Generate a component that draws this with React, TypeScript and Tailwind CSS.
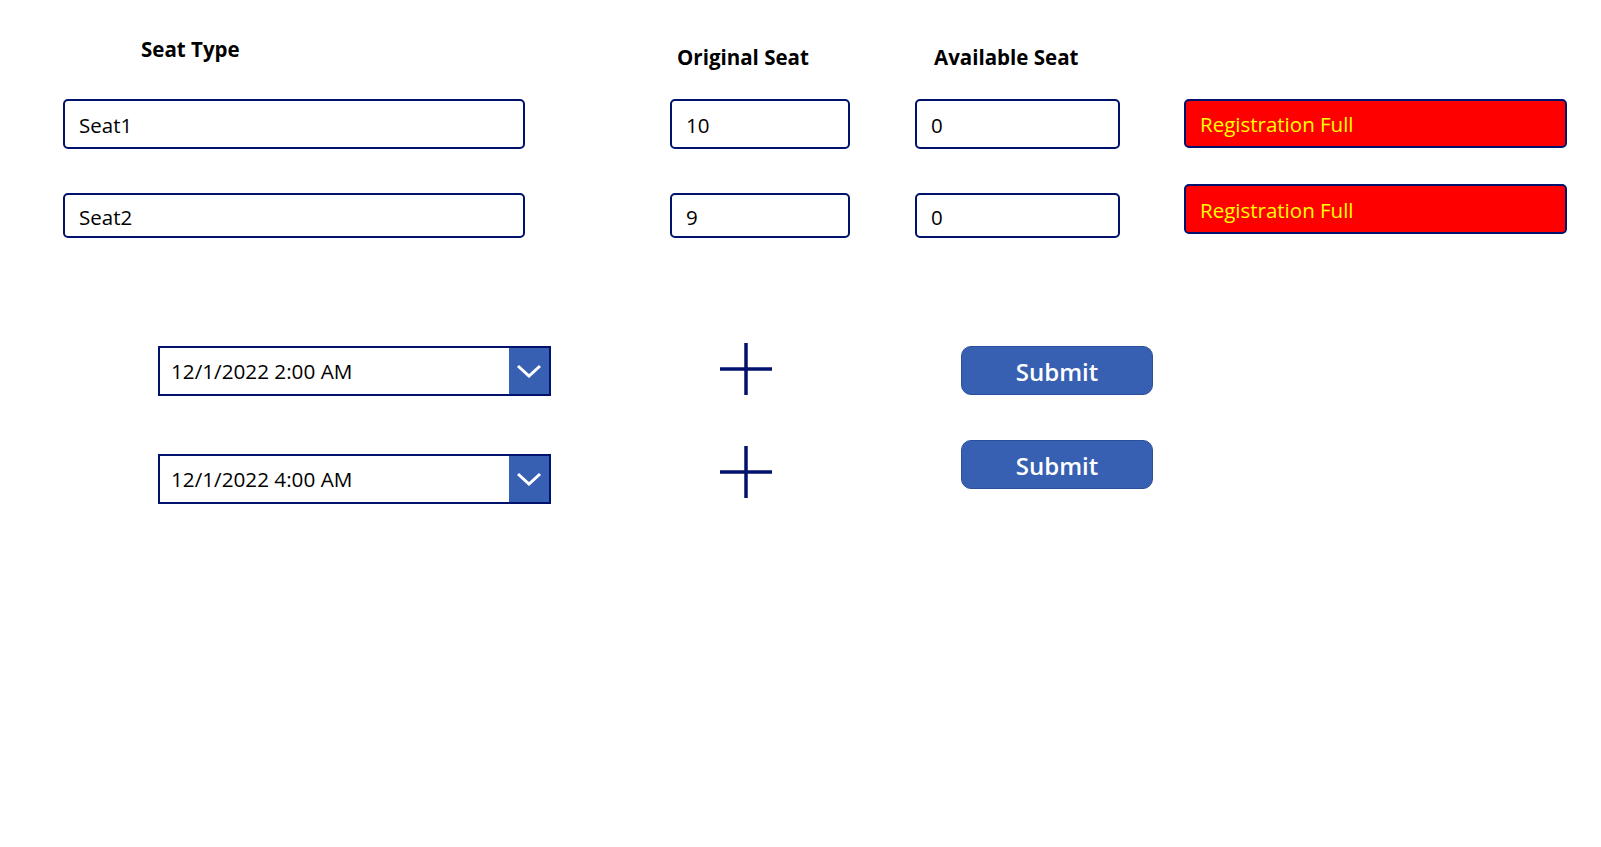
const navy = "border-[#00126b]";

function TextBox({ value, w, h, pt }: { value: string; w: string; h: string; pt: string }) {
  return (
    <div
      className={`${w} ${h} ${pt} flex items-center rounded-[5px] border-2 ${navy} bg-white pl-[14px] text-[20.5px] text-black`}
    >
      {value}
    </div>
  );
}

function FullBadge({ h, pt }: { h: string; pt: string }) {
  return (
    <div
      className={`w-[383px] ${h} ${pt} flex items-center rounded-[5px] border-2 ${navy} bg-[#ff0000] pl-[14px] text-[20.5px] text-[#ffff00]`}
    >
      Registration Full
    </div>
  );
}

function Dropdown({ value, className }: { value: string; className?: string }) {
  return (
    <div className={`flex h-[50px] w-[393px] border-2 ${navy} bg-white ${className ?? ""}`}>
      <div className="flex flex-1 items-center pl-[11px] pt-[2px] text-[20.7px] text-black">{value}</div>
      <div className="flex w-[40px] items-center justify-center bg-[#3860b2]">
        <svg width="26" height="14" viewBox="0 0 26 14" fill="none">
          <polyline points="2,2 13,12 24,2" stroke="white" strokeWidth="3" />
        </svg>
      </div>
    </div>
  );
}

function Plus({ className }: { className?: string }) {
  return (
    <svg width="52" height="52" viewBox="0 0 52 52" className={className}>
      <line x1="0" y1="26" x2="52" y2="26" stroke="#00126b" strokeWidth="3.5" />
      <line x1="26" y1="0" x2="26" y2="52" stroke="#00126b" strokeWidth="3.5" />
    </svg>
  );
}

function SubmitButton({ className }: { className?: string }) {
  return (
    <button
      className={`h-[49px] w-[192px] rounded-[10px] border border-[#2c4f9c] bg-[#3860b2] pt-[3px] text-[24px] font-semibold text-white ${className ?? ""}`}
    >
      Submit
    </button>
  );
}

export default function App() {
  return (
    <main
      className="h-[847px] w-[1601px] overflow-hidden bg-white pt-[35px]"
      style={{ fontFamily: '"Open Sans", "Noto Sans", sans-serif' }}
    >
      {/* headers */}
      <div className="flex items-start pl-[63px] text-[20.5px] font-bold leading-[28px] text-black">
        <div className="w-[607px] pl-[78px]">Seat Type</div>
        <div className="mt-[8px] w-[245px] pl-[7px]">Original Seat</div>
        <div className="mt-[8px] w-[269px] pl-[19px]">Available Seat</div>
      </div>

      {/* seat rows */}
      <div className="mt-[28px] flex items-start pl-[63px]">
        <div className="w-[607px]">
          <TextBox value="Seat1" w="w-[462px]" h="h-[50px]" pt="pt-[2px]" />
        </div>
        <div className="w-[245px]">
          <TextBox value="10" w="w-[180px]" h="h-[50px]" pt="pt-[2px]" />
        </div>
        <div className="w-[269px]">
          <TextBox value="0" w="w-[205px]" h="h-[50px]" pt="pt-[2px]" />
        </div>
        <FullBadge h="h-[49px]" pt="pt-[1px]" />
      </div>

      <div className="mt-[35px] flex items-start pl-[63px]">
        <div className="mt-[9px] w-[607px]">
          <TextBox value="Seat2" w="w-[462px]" h="h-[45px]" pt="pt-[4px]" />
        </div>
        <div className="mt-[9px] w-[245px]">
          <TextBox value="9" w="w-[180px]" h="h-[45px]" pt="pt-[4px]" />
        </div>
        <div className="mt-[9px] w-[269px]">
          <TextBox value="0" w="w-[205px]" h="h-[45px]" pt="pt-[4px]" />
        </div>
        <FullBadge h="h-[50px]" pt="pt-[3px]" />
      </div>

      {/* time slots */}
      <div className="mt-[105px] flex items-start pl-[158px]">
        <Dropdown value="12/1/2022 2:00 AM" className="mt-[3px]" />
        <Plus className="ml-[169px]" />
        <SubmitButton className="ml-[189px] mt-[3px]" />
      </div>

      <div className="mt-[44px] flex items-start pl-[158px]">
        <Dropdown value="12/1/2022 4:00 AM" className="mt-[14px] h-[49px]" />
        <Plus className="ml-[169px] mt-[6px]" />
        <SubmitButton className="ml-[189px]" />
      </div>
    </main>
  );
}
